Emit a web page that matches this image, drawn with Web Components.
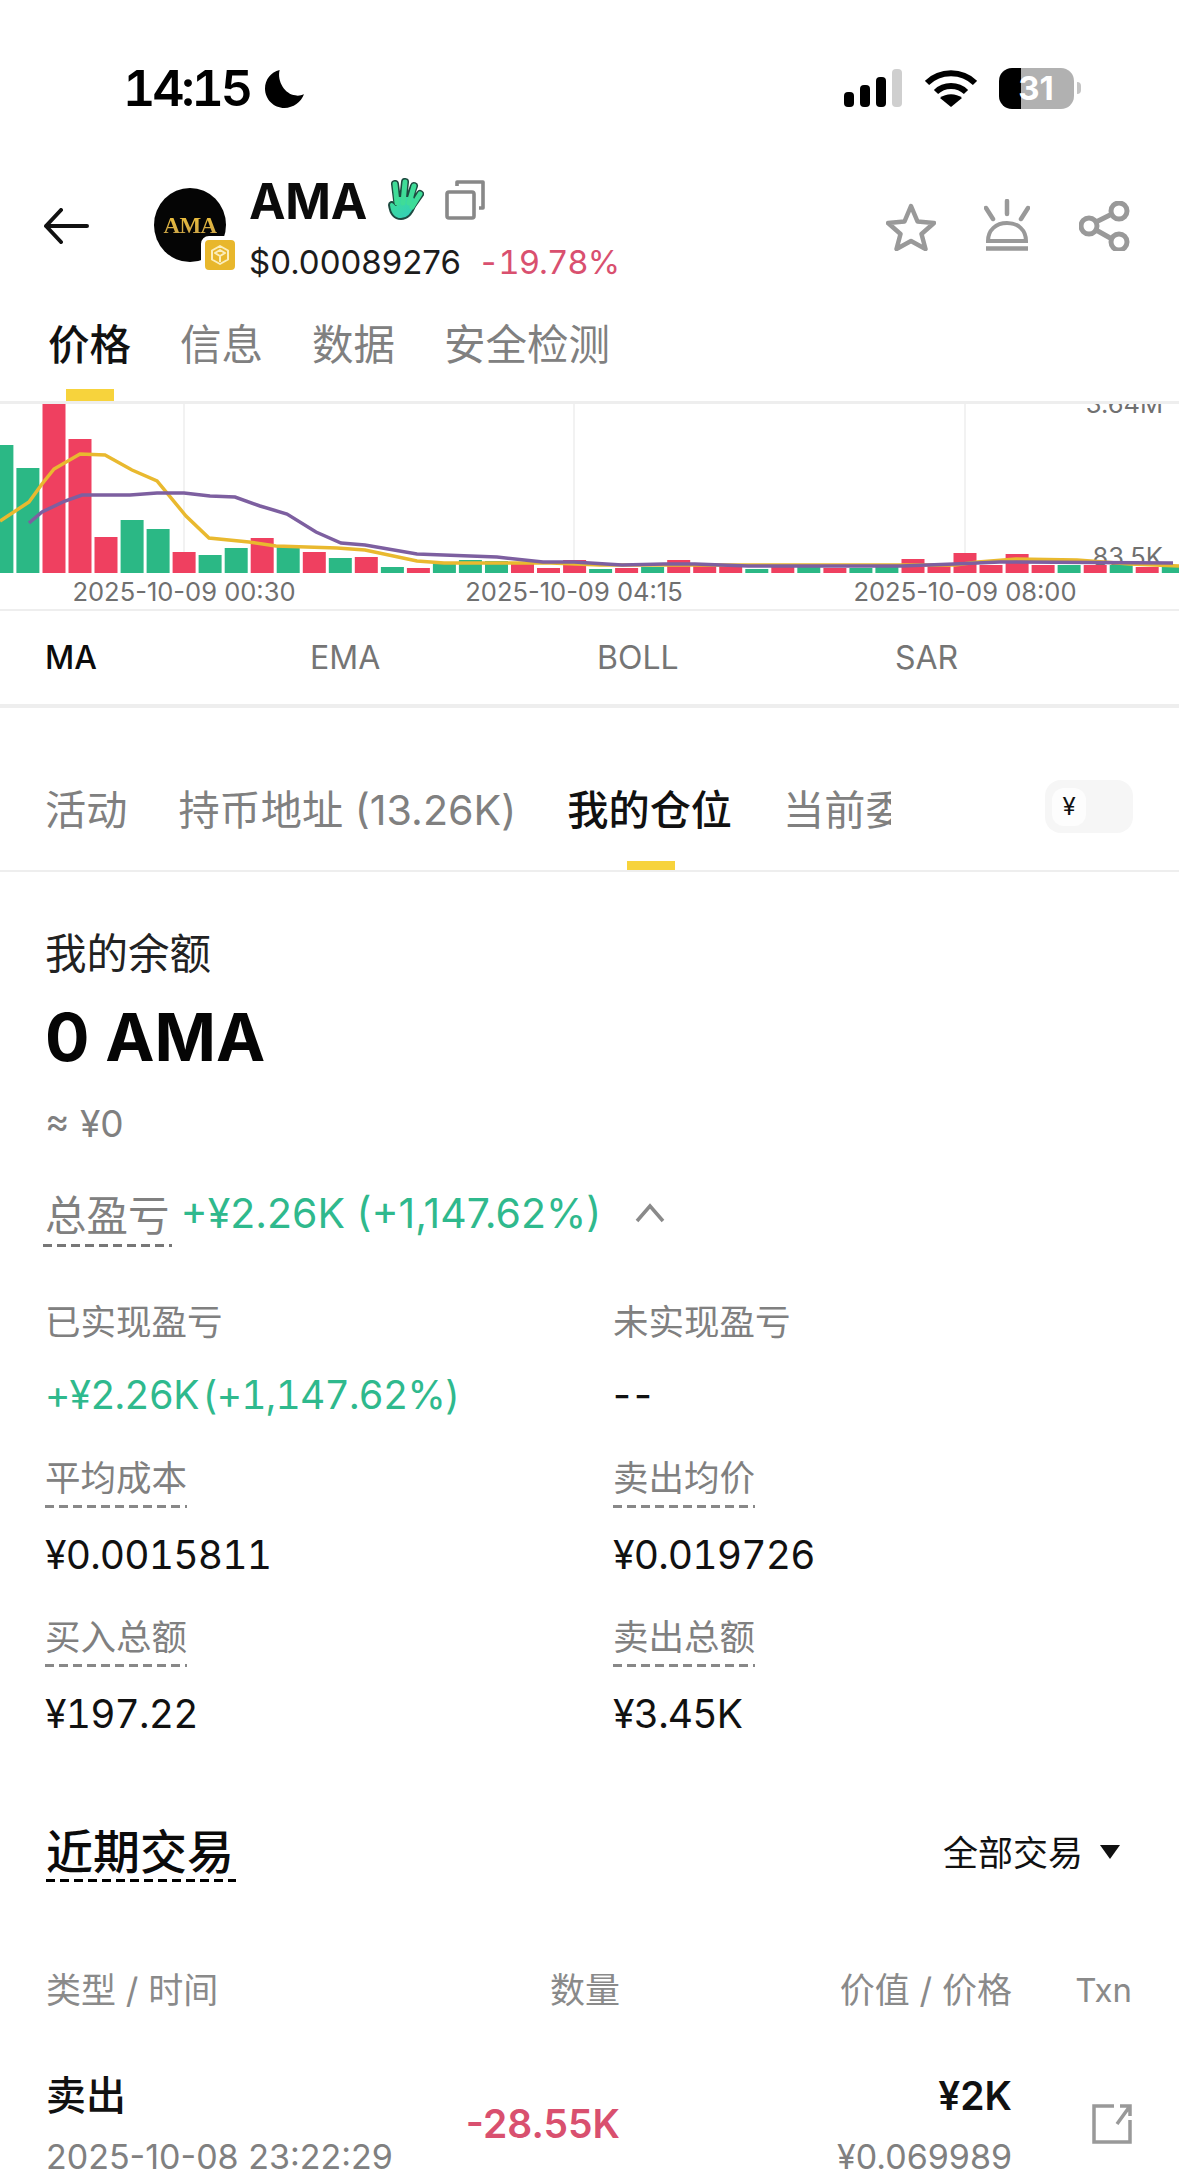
<!DOCTYPE html>
<html lang="zh">
<head>
<meta charset="utf-8">
<title>AMA</title>
<style>
  html, body { margin: 0; height: 2172px; overflow: hidden; background: #fff; }
  body { font-family: Inter, "Noto Sans CJK SC", sans-serif; color: #111; }
  token-page { display: block; height: 2172px; overflow: hidden; }
</style>
</head>
<body>
<token-page>
  <status-bar></status-bar>
  <token-header></token-header>
  <main-tabs></main-tabs>
  <volume-chart></volume-chart>
  <indicator-tabs></indicator-tabs>
  <section-tabs></section-tabs>
  <balance-panel></balance-panel>
  <div style="display:grid;grid-template-columns:568px 1fr;row-gap:35.5px;padding:53px 46px 0 45px">
    <stat-cell label="已实现盈亏" value="+¥2.26K (+1,147.62%)" tone="up"></stat-cell>
    <stat-cell label="未实现盈亏" value="--"></stat-cell>
    <stat-cell label="平均成本" value="¥0.0015811" dashed></stat-cell>
    <stat-cell label="卖出均价" value="¥0.019726" dashed></stat-cell>
    <stat-cell label="买入总额" value="¥197.22" dashed></stat-cell>
    <stat-cell label="卖出总额" value="¥3.45K" dashed></stat-cell>
  </div>
  <recent-trades></recent-trades>
</token-page>

<script>
// small helper, every element is just a style block plus markup
function component(name, css, html) {
  customElements.define(name, class extends HTMLElement {
    connectedCallback() {
      this.attachShadow({ mode: 'open' });
      const body = typeof html === 'function' ? html(this) : html;
      this.shadowRoot.innerHTML = `<style>${css}</style>${body}`;
    }
  });
}

const FONT = 'font-family: Inter, "Noto Sans CJK SC", sans-serif;';
const GREEN = '#2fb98d';
const RED = '#d9506f';

component('status-bar', `
  :host { display: flex; align-items: center; height: 160px; padding-top: 8px; ${FONT} }
  .time { margin-left: 123px; font-size: 50px; font-weight: 600; font-variant-numeric: tabular-nums; letter-spacing: -3.2px; line-height: 60px; color: #000; }
  .moon { margin-left: 15px; }
  .right { margin-left: auto; margin-right: 98px; display: flex; align-items: center; }
  .wifi { margin-left: 23px; }
  .batt { position: relative; margin-left: 22px; width: 75px; height: 41px; border-radius: 13px; overflow: hidden;
          background: linear-gradient(90deg, #000 0 22px, #b1b1b1 22px); }
  .batt span { display: block; text-align: center; font-size: 33px; font-weight: 700; line-height: 41px; color: #fff; margin-left: -1px; }
  .tip { margin-left: 3px; width: 4px; height: 12px; border-radius: 0 4px 4px 0; background: #c4c4c4; }
`, `
  <div class="time">14:15</div>
  <svg class="moon" width="39" height="39" viewBox="0 0 40 40"><path d="M15 1C6 3 0 11 0 20c0 11 9 20 20 20 9 0 17-6 20-14-3 1-6 2-9 1C21 26 12 13 15 1z" fill="#000"/></svg>
  <div class="right">
    <svg width="58" height="38" viewBox="0 0 58 38">
      <rect x="0" y="23" width="10" height="15" rx="4" fill="#000"/>
      <rect x="16" y="16" width="10" height="22" rx="4" fill="#000"/>
      <rect x="32" y="8" width="10" height="30" rx="4" fill="#000"/>
      <rect x="48" y="0" width="10" height="38" rx="4" fill="#cfcfcf"/>
    </svg>
    <svg class="wifi" width="52" height="38" viewBox="0 0 52 38" fill="none" stroke="#000" stroke-width="6">
      <path d="M2 14C15 1 37 1 50 14"/>
      <path d="M11 23C19 15 33 15 41 23"/>
      <path d="M26 38l-11-9c6-5 16-5 22 0z" fill="#000" stroke="none"/>
    </svg>
    <div class="batt"><span>31</span></div>
    <div class="tip"></div>
  </div>
`);

component('token-header', `
  :host { display: flex; align-items: center; height: 116px; ${FONT} }
  .back { margin-left: 43px; flex: none; }
  .avatar { position: relative; margin-left: 65px; margin-top: -2px; width: 72px; height: 74px; flex: none; border-radius: 50%; background: #050505;
            display: flex; align-items: center; justify-content: center; }
  .avatar span { font: 700 23px/1 "Liberation Serif", serif; letter-spacing: -.6px;
                 background: linear-gradient(180deg, #f0c23a, #c9a24a); -webkit-background-clip: text; background-clip: text; color: transparent; }
  .chain { position: absolute; left: 47px; top: 48px; width: 30px; height: 30px; border-radius: 8px; background: #e8b72c;
           border: 4px solid #fff; display: flex; align-items: center; justify-content: center; }
  .info { margin-left: 23px; }
  .name { display: flex; align-items: center; height: 62px; padding-top: 2px; }
  .name b { font-size: 49px; font-weight: 700; color: #0b0b0b; line-height: 62px; letter-spacing: -.3px; }
  .hand { margin-left: 19px; margin-top: -5px; }
  .copy { margin-left: 21px; margin-top: -4px; }
  .price { margin-top: 7px; height: 44px; line-height: 44px; font-size: 33px; white-space: nowrap; color: #1c1c1c; }
  .price span { margin-left: 17px; color: ${RED}; font-variant-numeric: tabular-nums; letter-spacing: -1px; }
  .actions { margin-left: auto; margin-right: 48px; align-self: flex-start; margin-top: 31px; display: flex; align-items: flex-start; }
  .star { margin-top: 4px; }
  .bell { margin-left: 48px; }
  .share { margin-left: 49px; margin-top: 2px; }
`, `
  <svg class="back" width="46" height="36" viewBox="0 0 46 36" fill="none" stroke="#111" stroke-width="4" stroke-linecap="round" stroke-linejoin="round">
    <path d="M44 18H3M18 2L3 18l15 16"/>
  </svg>
  <div class="avatar"><span>AMA</span>
    <div class="chain">
      <svg width="20" height="20" viewBox="0 0 20 20" fill="none" stroke="#fbeebd" stroke-width="2" stroke-linejoin="round">
        <path d="M10 1l8 4.5v9L10 19l-8-4.5v-9z"/><path d="M5 8l5-3 5 3-5 3zM10 11v6"/>
      </svg>
    </div>
  </div>
  <div class="info">
    <div class="name">
      <b>AMA</b>
      <svg class="hand" width="38" height="42" viewBox="0 0 38 42" fill="none" stroke-linecap="round" stroke-linejoin="round">
        <defs><linearGradient id="hg" x1="0" y1="0" x2="1" y2="1"><stop offset="0" stop-color="#40de94"/><stop offset="1" stop-color="#30cdbd"/></linearGradient></defs>
        <g stroke="#1d4a40" stroke-width="8">
          <path d="M11 22L9 6M17 22L19 4M23 22L28 8M27 26L34 16"/>
        </g>
        <path d="M15 41C7 41 4 35 3 27c0-3 3-4 5-2l2 2 1-9h16c3 2 3 6 2 10-3 8-7 13-14 13z" fill="url(#hg)" stroke="#1d4a40" stroke-width="2"/>
        <g stroke="#3fdc98" stroke-width="5">
          <path d="M11 25L9 6M17 25L19 4M23 25L28 8M26 29L34 16"/>
        </g>
      </svg>
      <svg class="copy" width="40" height="40" viewBox="0 0 40 40" fill="none" stroke="#888" stroke-width="3.6" stroke-linejoin="round">
        <rect x="2" y="12" width="27" height="26" rx="2"/>
        <path d="M12 6V2h26v26h-4"/>
      </svg>
    </div>
    <div class="price">$0.00089276<span>-19.78%</span></div>
  </div>
  <div class="actions">
    <svg class="star" width="50" height="48" viewBox="0 0 50 48" fill="none" stroke="#999" stroke-width="4.5" stroke-linejoin="round">
      <path d="M25 3l6.5 15.5L48 20 35.5 31 39.5 46 25 38 10.500 46l4-15L2 20l16.500-1.500z"/>
    </svg>
    <svg class="bell" width="46" height="52" viewBox="0 0 46 52" fill="none" stroke="#999" stroke-width="4.500" stroke-linecap="round">
      <path d="M23 2v13M2 9l7 11M44 9l-7 11"/>
      <path d="M4 42c0-11 8-18 19-18s19 7 19 18z" stroke-width="4"/>
      <path d="M2 49.500h42" stroke-linecap="butt"/>
    </svg>
    <svg class="share" width="52" height="50" viewBox="0 0 52 50" fill="none" stroke="#999" stroke-width="5">
      <circle cx="40" cy="10" r="8"/><circle cx="10" cy="25" r="8"/><circle cx="40" cy="41" r="8"/>
      <path d="M17 21l16-8M17 29l16 9"/>
    </svg>
  </div>
`);

component('main-tabs', `
  :host { display: block; ${FONT} border-bottom: 3px solid #eee; }
  .row { display: flex; gap: 49px; height: 95px; padding-top: 10px; padding-left: 48px; align-items: center;
         font-size: 41.500px; color: #808080; box-sizing: content-box; }
  .on { color: #111; font-weight: 500; }
  .bar { width: 48px; height: 12px; margin-left: 66px; background: #f7d33c; }
`, `
  <div class="row"><span class="on">价格</span><span>信息</span><span>数据</span><span>安全检测</span></div>
  <div class="bar"></div>
`);

// volume bars read off the screenshot: [colour, height in px]
const BARS = [['g',128],['g',105],['r',169],['r',134],['r',36],['g',53],['g',44],['r',21],['g',18],['g',25],['r',35],['g',26],
  ['r',21],['g',15],['r',16],['g',6],['r',5],['g',10],['g',13],['g',12],['r',10],['r',5],['r',13],['g',4],['r',5],['g',6],
  ['r',13],['r',7],['r',7],['g',4],['r',7],['g',6],['r',5],['g',5],['g',6],['r',14],['r',7],['r',20],['r',8],['r',19],['r',8],
  ['g',8],['r',8],['g',8],['r',6],['g',7]];
const YELLOW = '0,522 29,503 42,485 54,470 80,455 105,456 132,471 157,482 186,517 209,539 249,543 276,547 337,549 365,551 417,562 444,564 497,564 551,564 600,566 790,566 955,566 978,563 1016,560 1077,561 1130,565 1179,567';
const PURPLE = '29,524 42,513 65,502 82,496 130,496 157,494 184,494 210,497 235,498 260,507 287,515 316,533 341,544 365,546 417,555 497,558 543,563 574,563 622,566 664,565 695,565 748,567 901,567 954,565 1000,563 1173,564';

component('volume-chart', `
  :host { display: block; position: relative; height: 205px; overflow: hidden; border-bottom: 2px solid #eee; ${FONT} }
  svg { position: absolute; left: 0; top: 0; }
  .axis { position: absolute; width: 260px; margin-left: -130px; text-align: center; top: 170px; line-height: 36px; font-size: 25.500px; color: #707070; white-space: nowrap; }
  .scale { position: absolute; right: 16px; font-size: 25.500px; line-height: 30px; color: #707070; }
`, () => {
  const rects = BARS.map(([c, h], i) => {
    const x = -9.6 + 26.03 * i;
    return `<rect x="${x.toFixed(1)}" y="${169 - h}" width="23" height="${h}" fill="${c === 'g' ? '#2bb885' : '#ef4060'}"/>`;
  }).join('');
  const shift = pts => pts.split(' ').map(p => { const [x, y] = p.split(','); return `${x},${y - 405}`; }).join(' ');
  return `
    <svg width="1179" height="205" viewBox="0 0 1179 205">
      <g stroke="#eee" stroke-width="1.500"><path d="M184 0V169M574 0V169M965 0V169"/></g>
    </svg>
    <div class="scale" style="top:-15px">3.64M</div>
    <div class="scale" style="top:138px">83.5K</div>
    <svg width="1179" height="205" viewBox="0 0 1179 205">
      ${rects}
      <polyline points="${shift(YELLOW)}" fill="none" stroke="#e9b92f" stroke-width="3.500"/>
      <polyline points="${shift(PURPLE)}" fill="none" stroke="#7d5fa0" stroke-width="3.500"/>
    </svg>
    <div class="axis" style="left:184px">2025-10-09 00:30</div>
    <div class="axis" style="left:574px">2025-10-09 04:15</div>
    <div class="axis" style="left:965px">2025-10-09 08:00</div>
  `;
});

component('indicator-tabs', `
  :host { display: grid; grid-template-columns: 265px 287px 298px auto; align-items: center; height: 93px; padding-left: 45px;
          border-bottom: 4px solid #eee; font-size: 32px; color: #757575; ${FONT} }
  .on { color: #0b0b0b; font-weight: 500; }
`, `<span class="on">MA</span><span>EMA</span><span>BOLL</span><span>SAR</span>`);

component('section-tabs', `
  :host { display: block; border-bottom: 2px solid #eee; ${FONT} }
  .row { display: flex; align-items: center; height: 108px; padding-top: 45px; padding-left: 45px; font-size: 41.200px; color: #808080; }
  .scroll { display: flex; align-items: center; width: 850px; overflow: hidden; white-space: nowrap; flex: none; margin-right: 0; clip-path: inset(0 4px 0 0); }
  .scroll span { margin-right: 51px; flex: none; }
  .on { color: #111; font-weight: 500; }
  .toggle { margin-left: 150px; width: 88px; height: 53px; border-radius: 16px; background: #f6f6f6; display: flex; align-items: center; padding-left: 7px; box-sizing: border-box; margin-top: -1px; }
  .toggle i { width: 34px; height: 38px; border-radius: 12px; background: #fdfdfd; font-style: normal; font-size: 24px; color: #111; text-align: center; line-height: 38px; }
  .bar { width: 48px; height: 9px; margin-left: 627px; background: #f7d33c; }
`, `
  <div class="row">
    <div class="scroll"><span>活动</span><span>持币地址 (13.26K)</span><span class="on">我的仓位</span><span>当前委托</span></div>
    <div class="toggle"><i>¥</i></div>
  </div>
  <div class="bar"></div>
`);

component('balance-panel', `
  :host { display: block; padding: 56px 46px 0 45px; ${FONT} }
  .label { font-size: 41.500px; line-height: 52px; color: #222; }
  .amount { margin-top: 17px; font-size: 66px; font-weight: 700; line-height: 80px; color: #050505; }
  .approx { margin-top: 22px; font-size: 37px; line-height: 50px; color: #808080; }
  .pnl { margin-top: 36px; display: flex; align-items: center; height: 56px; font-size: 41px; }
  .pnl span { color: #808080; font-size: 41.500px; }
  .pnl b { margin-left: 11px; font-weight: 400; color: ${GREEN}; white-space: nowrap; }
  .pnl svg { margin-left: 34px; }
  .dash { margin: 3px 0 0 -2px; width: 129px; height: 3px; background: repeating-linear-gradient(90deg, #777 0 9px, transparent 9px 14px); }
`, `
  <div class="label">我的余额</div>
  <div class="amount">0 AMA</div>
  <div class="approx">≈ ¥0</div>
  <div class="pnl"><span>总盈亏</span><b>+¥2.26K (+1,147.62%)</b>
    <svg width="30" height="20" viewBox="0 0 30 20" fill="none" stroke="#8a8a8a" stroke-width="3.500"><path d="M2 18L15 3l13 15"/></svg>
  </div>
  <div class="dash"></div>
`);

customElements.define('stat-cell', class extends HTMLElement {
  connectedCallback() {
    this.attachShadow({ mode: 'open' });
    const dashed = this.hasAttribute('dashed');
    const up = this.getAttribute('tone') === 'up';
    const empty = this.getAttribute('value') === '--';
    this.shadowRoot.innerHTML = `
      <style>
        :host { display: block; ${FONT} }
        .label { font-size: 35.500px; line-height: 46px; color: #808080; }
        .dash { margin-top: 3px; width: 142px; height: 3px; background: repeating-linear-gradient(90deg, #888 0 9px, transparent 9px 14px); }
        .value { height: 50px; line-height: 50px; font-size: 39px; font-variant-numeric: ${empty ? 'normal' : 'tabular-nums'}; letter-spacing: ${empty ? '3px' : '-.8px'}; word-spacing: -6px; white-space: nowrap; color: ${up ? GREEN : '#111'}; margin-top: ${dashed ? 22 : 24}px; }
      </style>
      <div class="label">${this.getAttribute('label')}</div>
      ${dashed ? '<div class="dash"></div>' : ''}
      <div class="value">${this.getAttribute('value')}</div>
    `;
  }
});

component('recent-trades', `
  :host { display: block; padding: 83px 47px 0 46px; ${FONT} }
  .top { display: flex; justify-content: space-between; align-items: flex-start; }
  .title { font-size: 47px; line-height: 54px; font-weight: 500; color: #0b0b0b; padding-top: 3px; }
  .dash { height: 3px; width: 190px; background: repeating-linear-gradient(90deg, #000 0 9px, transparent 9px 14px); }
  .filter { display: flex; align-items: center; height: 56px; font-size: 35px; color: #111; margin-right: 12px; }
  .filter svg { margin-left: 17px; margin-top: 3px; }
  .grid, .row { display: grid; grid-template-columns: 380px 194px 392px 120px; }
  .grid { margin-top: 84px; }
  .head { height: 48px; line-height: 48px; font-size: 35px; color: #8a8a8a; text-align: right; white-space: nowrap; }
  .head:first-child { text-align: left; }
  .head.txn { font-size: 33px; }
  .row { margin-top: 58px; align-items: center; }
  .big { font-size: 40px; line-height: 48px; font-weight: 500; color: #111; }
  .sub { margin-top: 14px; font-size: 34px; line-height: 46px; color: #808080; white-space: nowrap; }
  .qty { text-align: right; font-size: 39px; font-weight: 600; color: ${RED}; white-space: nowrap; justify-self: end; margin-top: -6px; }
  .value { text-align: right; }
  .value .big { font-weight: 600; font-size: 39px; }
  .link { justify-self: end; margin-top: -4px; }
`, `
  <div class="top">
    <div><div class="title">近期交易</div><div class="dash"></div></div>
    <div class="filter">全部交易
      <svg width="20" height="14" viewBox="0 0 20 14"><path d="M0 0h20L10 14z" fill="#111"/></svg>
    </div>
  </div>
  <div class="grid">
    <div class="head">类型 / 时间</div><div class="head">数量</div><div class="head">价值 / 价格</div><div class="head txn">Txn</div>
  </div>
  <div class="row">
    <div>
      <div class="big">卖出</div>
      <div class="sub">2025-10-08 23:22:29</div>
    </div>
    <div class="qty">-28.55K</div>
    <div class="value"><div class="big">¥2K</div><div class="sub">¥0.069989</div></div>
    <svg class="link" width="40" height="40" viewBox="0 0 40 40" fill="none" stroke="#999" stroke-width="3.500">
      <path d="M22 2H2v36h36V16M25 20L38 2M28 2h10v10"/>
    </svg>
  </div>
`);

component('token-page', '', '<slot></slot>');
</script>
</body>
</html>
